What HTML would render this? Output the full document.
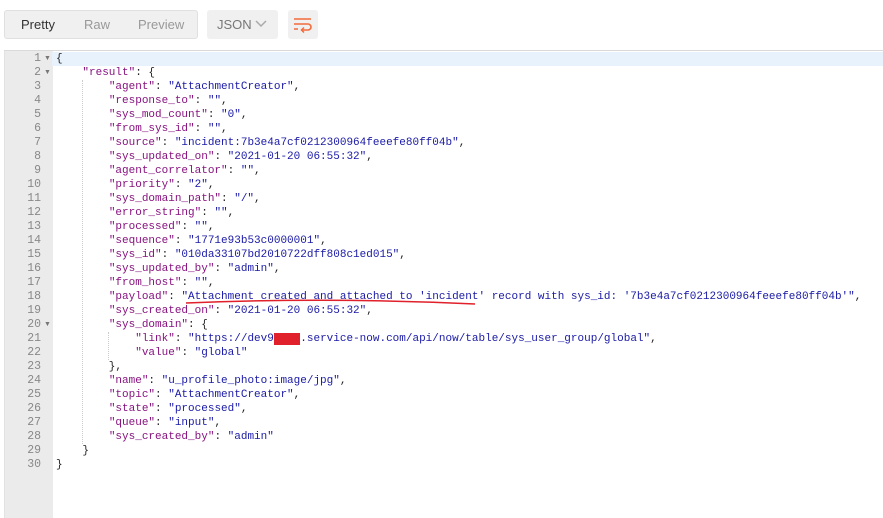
<!DOCTYPE html>
<html><head><style>
body{margin:0;width:883px;height:518px;background:#fff;overflow:hidden;position:relative;font-family:"Liberation Sans",sans-serif}
.btn{position:absolute;top:10px;height:29px;background:#f0f0f0;border-radius:3px;font-size:13px;line-height:29px;color:#888}
#ed{position:absolute;left:4px;top:50px;right:0;bottom:0;border-top:1px solid #dadada}
#gut{position:absolute;left:0;top:0;width:48px;bottom:0;background:#ebebeb;border-left:1px solid #e2e2e2}
#hl{position:absolute;left:48px;right:0;top:1px;height:14px;background:#e8f2fc}
pre{margin:0;position:absolute;top:1px;font-family:"Liberation Mono",monospace;font-size:11px;line-height:14px}
#nums{left:0;width:37px;text-align:right;color:#888;font-size:11.5px}
#code{left:52px;color:#222}
.k{color:#881280}.s{color:#1a1aa6}
.ar{position:absolute;left:40px;font-size:7px;color:#777}
.g{position:absolute;border-left:1px dotted #ccc}
</style></head><body>
<div class="btn" style="left:4px;width:192px;border:1px solid #e0e0e0;height:27px;line-height:27px"><span style="position:absolute;left:16px;color:#333">Pretty</span><span style="position:absolute;left:79px;color:#999">Raw</span><span style="position:absolute;left:133px;color:#999">Preview</span></div>
<div class="btn" style="left:207px;width:71px;color:#777"><span style="position:absolute;left:10px">JSON</span><svg style="position:absolute;left:48px;top:10px" width="12" height="8"><path d="M1 1 L6 6 L11 1" stroke="#aaa" stroke-width="1.5" fill="none"/></svg></div>
<div class="btn" style="left:288px;width:30px"><svg style="position:absolute;left:5px;top:7px" width="20" height="16"><path d="M1 2H18M1 7H15a3 3 0 0 1 0 6H9M1 12H5" stroke="#f26b3a" stroke-width="1.6" fill="none"/><path d="M11 10.5L8.5 13L11 15.5" stroke="#f26b3a" stroke-width="1.5" fill="none"/></svg></div>
<div id="ed">
<div id="gut"></div><div id="hl"></div>
<span class="ar" style="top:4px">▼</span><span class="ar" style="top:18px">▼</span><span class="ar" style="top:270px">▼</span>
<div class="g" style="left:78px;top:29px;height:364px"></div>
<div class="g" style="left:104px;top:281px;height:28px"></div>
<pre id="nums">1
2
3
4
5
6
7
8
9
10
11
12
13
14
15
16
17
18
19
20
21
22
23
24
25
26
27
28
29
30</pre>
<pre id="code">{
    <span class="k">"result"</span>: {
        <span class="k">"agent"</span>: <span class="s">"AttachmentCreator"</span>,
        <span class="k">"response_to"</span>: <span class="s">""</span>,
        <span class="k">"sys_mod_count"</span>: <span class="s">"0"</span>,
        <span class="k">"from_sys_id"</span>: <span class="s">""</span>,
        <span class="k">"source"</span>: <span class="s">"incident:7b3e4a7cf0212300964feeefe80ff04b"</span>,
        <span class="k">"sys_updated_on"</span>: <span class="s">"2021-01-20 06:55:32"</span>,
        <span class="k">"agent_correlator"</span>: <span class="s">""</span>,
        <span class="k">"priority"</span>: <span class="s">"2"</span>,
        <span class="k">"sys_domain_path"</span>: <span class="s">"/"</span>,
        <span class="k">"error_string"</span>: <span class="s">""</span>,
        <span class="k">"processed"</span>: <span class="s">""</span>,
        <span class="k">"sequence"</span>: <span class="s">"1771e93b53c0000001"</span>,
        <span class="k">"sys_id"</span>: <span class="s">"010da33107bd2010722dff808c1ed015"</span>,
        <span class="k">"sys_updated_by"</span>: <span class="s">"admin"</span>,
        <span class="k">"from_host"</span>: <span class="s">""</span>,
        <span class="k">"payload"</span>: <span class="s">"Attachment created and attached to 'incident' record with sys_id: '7b3e4a7cf0212300964feeefe80ff04b'"</span>,
        <span class="k">"sys_created_on"</span>: <span class="s">"2021-01-20 06:55:32"</span>,
        <span class="k">"sys_domain"</span>: {
            <span class="k">"link"</span>: <span class="s">"https://dev9<span style="background:#e0202a;color:#e0202a">9999</span>.service-now.com/api/now/table/sys_user_group/global"</span>,
            <span class="k">"value"</span>: <span class="s">"global"</span>
        },
        <span class="k">"name"</span>: <span class="s">"u_profile_photo:image/jpg"</span>,
        <span class="k">"topic"</span>: <span class="s">"AttachmentCreator"</span>,
        <span class="k">"state"</span>: <span class="s">"processed"</span>,
        <span class="k">"queue"</span>: <span class="s">"input"</span>,
        <span class="k">"sys_created_by"</span>: <span class="s">"admin"</span>
    }
}</pre>
</div>
<svg style="position:absolute;left:0;top:0" width="883" height="518"><path d="M186 303 Q330 297 475 304" stroke="#e0202a" stroke-width="1.5" fill="none"/></svg>
</body></html>
